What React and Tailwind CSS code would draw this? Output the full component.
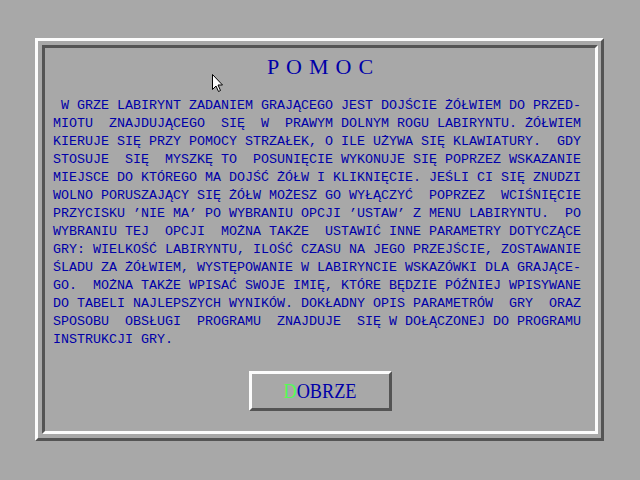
const LINES = [
  ' W GRZE LABIRYNT ZADANIEM GRAJĄCEGO JEST DOJŚCIE ŻÓŁWIEM DO PRZED-',
  'MIOTU  ZNAJDUJĄCEGO  SIĘ  W  PRAWYM DOLNYM ROGU LABIRYNTU. ŻÓŁWIEM',
  'KIERUJE SIĘ PRZY POMOCY STRZAŁEK, O ILE UŻYWA SIĘ KLAWIATURY.  GDY',
  'STOSUJE  SIĘ  MYSZKĘ TO  POSUNIĘCIE WYKONUJE SIĘ POPRZEZ WSKAZANIE',
  'MIEJSCE DO KTÓREGO MA DOJŚĆ ŻÓŁW I KLIKNIĘCIE. JEŚLI CI SIĘ ZNUDZI',
  'WOLNO PORUSZAJĄCY SIĘ ŻÓŁW MOŻESZ GO WYŁĄCZYĆ  POPRZEZ  WCIŚNIĘCIE',
  'PRZYCISKU ’NIE MA’ PO WYBRANIU OPCJI ’USTAW’ Z MENU LABIRYNTU.  PO',
  'WYBRANIU TEJ  OPCJI  MOŻNA TAKŻE  USTAWIĆ INNE PARAMETRY DOTYCZĄCE',
  'GRY: WIELKOŚĆ LABIRYNTU, ILOŚĆ CZASU NA JEGO PRZEJŚCIE, ZOSTAWANIE',
  'ŚLADU ZA ŻÓŁWIEM, WYSTĘPOWANIE W LABIRYNCIE WSKAZÓWKI DLA GRAJĄCE-',
  'GO.  MOŻNA TAKŻE WPISAĆ SWOJE IMIĘ, KTÓRE BĘDZIE PÓŹNIEJ WPISYWANE',
  'DO TABELI NAJLEPSZYCH WYNIKÓW. DOKŁADNY OPIS PARAMETRÓW  GRY  ORAZ',
  'SPOSOBU  OBSŁUGI  PROGRAMU  ZNAJDUJE  SIĘ W DOŁĄCZONEJ DO PROGRAMU',
  'INSTRUKCJI GRY.',
];

function Pointer() {
  return (
    <svg className="absolute left-[212px] top-[74px]" width="13" height="20" viewBox="0 0 13 20">
      <path d="M0.5 0.5 L0.5 15.5 L4 12 L6.5 17.5 L8.5 16.5 L6 11 L10.5 11 Z" fill="#fcfcfc" stroke="#000" strokeWidth="1" />
    </svg>
  );
}

export default function App() {
  return (
    <div className="relative w-[640px] h-[480px] bg-[#a8a8a8] pt-[38px] pl-[35px]">
      {/* outer raised frame */}
      <div className="w-[569px] h-[403px] border-[3px] border-t-[#fcfcfc] border-l-[#fcfcfc] border-b-[#545454] border-r-[#545454] pt-[4px] pl-[4px] pr-[3px] pb-[4px]">
        {/* inner sunken panel */}
        <div className="h-full border-[3px] border-t-[#545454] border-l-[#545454] border-b-[#fcfcfc] border-r-[#fcfcfc] flex flex-col items-center">
          <h1 className="mt-[8px] h-[22px] text-[22px] leading-[22px] tracking-[7px] pl-[7px] text-[#0000a8] font-['Liberation_Serif',serif]">
            POMOC
          </h1>

          <div className="self-start mt-[19px] pl-[8px] whitespace-pre text-[13.333px] leading-[18px] text-[#0000a8] font-['Liberation_Mono',monospace]">
            {LINES.map((l, i) => (
              <div key={i}>{l}</div>
            ))}
          </div>

          <button className="mt-[22px] w-[143px] h-[40px] border-[3px] border-t-[#fcfcfc] border-l-[#fcfcfc] border-b-[#545454] border-r-[#545454] bg-[#a8a8a8] flex items-center justify-center">
            <span className="inline-block scale-x-[0.83] text-[22px] leading-[22px] text-[#0000a8] font-['Liberation_Serif',serif]">
              <span className="text-[#54fc54]">D</span>OBRZE
            </span>
          </button>
        </div>
      </div>
      <Pointer />
    </div>
  );
}
